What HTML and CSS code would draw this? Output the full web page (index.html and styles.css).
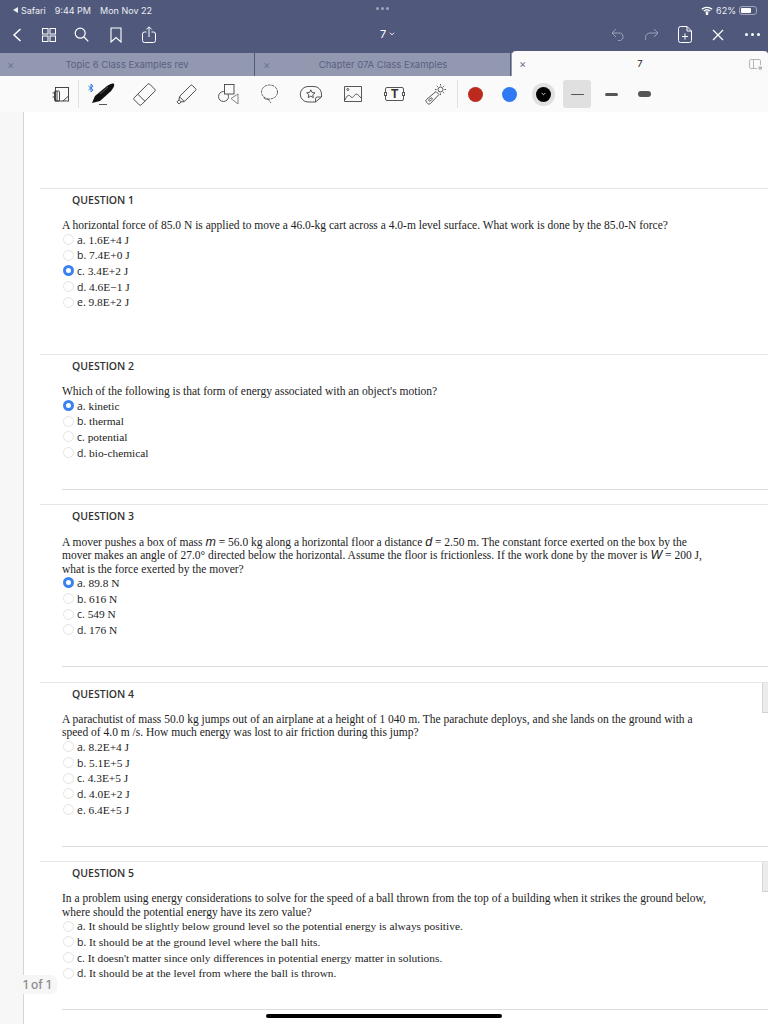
FILE: index.html
```html
<!DOCTYPE html>
<html lang="en">
<head>
  <meta charset="UTF-8">
  <title>Quiz notes</title>
  <link rel="stylesheet" href="styles.css">
</head>
<body>

  <!-- Status bar -->
  <div class="status">
    <div class="status-left">
      <span class="back-tri"></span><span>Safari</span><span class="st-time">9:44 PM</span><span class="st-date">Mon Nov 22</span>
    </div>
    <div class="status-dots"><i></i><i></i><i></i></div>
    <div class="status-right">
      <svg width="12" height="9" viewBox="0 0 14 10" fill="none" stroke="#fff" stroke-width="1.6"><path d="M1 3.6C4.4.6 9.6.6 13 3.6"/><path d="M3.2 5.6c2.2-1.8 5.4-1.8 7.6 0"/><path d="M5.3 7.4c1-.8 2.4-.8 3.4 0"/><circle cx="7" cy="9" r=".7" fill="#fff"/></svg>
      <span>62%</span>
      <span class="battery"><span class="battery-fill"></span></span>
    </div>
  </div>

  <!-- Navigation -->
  <div class="nav">
    <div class="nav-left">
      <svg class="ic-back" width="10" height="16" viewBox="0 0 10 16" fill="none" stroke="#fff" stroke-width="1.5"><path d="M8.5 2 2 8l6.500 6"/></svg>
      <svg class="ic-grid" width="14" height="14" viewBox="0 0 14 14" fill="none" stroke="#fff" stroke-width="1"><rect x=".5" y=".5" width="5.500" height="5.500"/><rect x="8" y=".5" width="5.500" height="5.500"/><rect x=".5" y="8" width="5.500" height="5.500"/><rect x="8" y="8" width="5.500" height="5.500"/></svg>
      <svg class="ic-search" width="15" height="15" viewBox="0 0 15 15" fill="none" stroke="#fff" stroke-width="1.2"><circle cx="6.200" cy="6.200" r="5"/><path d="m10 10 4.300 4.300"/></svg>
      <svg class="ic-mark" width="12" height="16" viewBox="0 0 12 16" fill="none" stroke="#fff" stroke-width="1.1"><path d="M1 1h10v14L6 10.500 1 15z"/></svg>
      <svg class="ic-share" width="14" height="17" viewBox="0 0 14 17" fill="none" stroke="#fff" stroke-width="1"><path d="M4.500 6H2.500A2 2 0 0 0 .5 8v6.500a2 2 0 0 0 2 2h9a2 2 0 0 0 2-2V8a2 2 0 0 0-2-2h-2"/><path d="M7 11V1M4.300 3.500 7 .8l2.700 2.700"/></svg>
    </div>
    <div class="nav-title">7 <svg width="6" height="4" viewBox="0 0 6 4" fill="none" stroke="#e6e8f0" stroke-width="1"><path d="m.8.8 2.200 2 2.200-2"/></svg></div>
    <div class="nav-right">
      <svg class="ic-undo" width="15" height="13" viewBox="0 0 15 13" fill="none" stroke="#9aa0b8" stroke-width="1"><path d="M5 1 1 5l4 4"/><path d="M1 5h8.500a4 4 0 0 1 0 7.500H7"/></svg>
      <svg class="ic-redo" width="15" height="13" viewBox="0 0 15 13" fill="none" stroke="#9aa0b8" stroke-width="1"><path d="m10 1 4 4-4 4"/><path d="M14 5H6a4.500 4.500 0 0 0-4.500 4.500V12"/></svg>
      <svg class="ic-new" width="14" height="17" viewBox="0 0 14 17" fill="none" stroke="#fff" stroke-width="1"><path d="M2.500.5H9L13.500 5v9.500a2 2 0 0 1-2 2h-9a2 2 0 0 1-2-2v-12a2 2 0 0 1 2-2zM9 .5V5h4.500"/><path d="M7 7.500v6M4 10.500h6"/></svg>
      <svg class="ic-close" width="12" height="12" viewBox="0 0 12 12" fill="none" stroke="#fff" stroke-width="1.200"><path d="m1 1 10 10M11 1 1 11"/></svg>
      <div class="more"><i></i><i></i><i></i></div>
    </div>
  </div>

  <!-- Tabs -->
  <div class="tabs">
    <div class="tab"><span class="tab-x">&times;</span><span class="tab-name">Topic 6 Class Examples rev</span></div>
    <div class="tab"><span class="tab-x">&times;</span><span class="tab-name">Chapter 07A Class Examples</span></div>
    <div class="tab tab-active">
      <span class="tab-x">&times;</span><span class="tab-name">7</span>
      <svg class="tab-split" width="13" height="11" viewBox="0 0 13 11" fill="none" stroke="#b5b5b5" stroke-width="1"><path d="M11.500 6V2a1.500 1.500 0 0 0-1.500-1.500H2A1.500 1.500 0 0 0 .5 2v6A1.500 1.500 0 0 0 2 9.500h6M4.500.5v9"/><rect x="9.500" y="7.500" width="3.500" height="3" fill="#b5b5b5" stroke="none"/></svg>
    </div>
  </div>

  <!-- Tool bar -->
  <div class="tools">
    <div class="tool-set">
      <div class="tool">
        <svg width="17" height="15" viewBox="0 0 17 15" fill="none" stroke="#333" stroke-width=".9"><rect x="3.500" y=".5" width="13" height="13.500"/><rect x="2.500" y="4" width="5" height="10" rx="1"/><path d="M.5 6h2M.5 10h2M5 4v10M11 14l5.500-5"/></svg>
      </div>
      <div class="tool-sep"></div>
      <div class="tool">
        <svg class="bt" width="6" height="10" viewBox="0 0 6 10" fill="none" stroke="#2f78ee" stroke-width="1"><path d="M.5 3 5 6.800 3 9V1l2 2.200L.5 7"/></svg>
        <svg width="23" height="23" viewBox="0 0 23 23"><path d="M0 20 3 13 15 3C18 1 21 0 22 1c1 2-2 6-4 8L8 18z" fill="#111"/><path d="M7 21.500h8" stroke="#444" stroke-width=".9"/><path d="M8 11 16 4" stroke="#888" stroke-width=".6"/></svg>
      </div>
      <div class="tool">
        <svg width="23" height="23" viewBox="0 0 23 23" fill="none" stroke="#444" stroke-width=".9"><g transform="rotate(-45 11.500 11.500)"><rect x=".5" y="6.500" width="22" height="10" rx="1.500"/><path d="M7 6.500v10"/></g></svg>
      </div>
      <div class="tool">
        <svg width="21" height="21" viewBox="0 0 21 21" fill="none" stroke="#444" stroke-width=".9"><g transform="rotate(-45 10.500 10.500)"><rect x="4" y="7" width="17" height="7" rx="1"/><path d="M4 7 1.500 9v3L4 14M1.500 9H-1.500v3h3"/></g></svg>
      </div>
      <div class="tool">
        <svg width="21" height="20" viewBox="0 0 21 20" fill="none" stroke="#444" stroke-width=".9"><circle cx="5.500" cy="12.500" r="5"/><path d="M20 10v10l-7-5.500z" stroke="#777"/><rect x="6.500" y=".5" width="9.500" height="9.500" fill="#fafafa"/></svg>
      </div>
      <div class="tool">
        <svg width="19" height="20" viewBox="0 0 19 20" fill="none" stroke="#555" stroke-width=".9" stroke-dasharray="3 .7"><ellipse cx="9.500" cy="8" rx="8" ry="7"/><path d="M4 13c0 2 2 3 4 2M8 15l3 4"/></svg>
      </div>
      <div class="tool">
        <svg width="22" height="17" viewBox="0 0 22 17" fill="none" stroke="#444" stroke-width=".9"><path d="M15.500 16H8a7.500 7.500 0 0 1 0-15.500h6A7.500 7.500 0 0 1 21.500 8v3z"/><path d="M21 11h-3.500a2 2 0 0 0-2 2v3"/><path d="m10.800 3.800 1.300 2.700 2.900.3-2.200 2 .6 2.900-2.600-1.500-2.600 1.500.6-2.900-2.200-2 2.900-.3z"/></svg>
      </div>
      <div class="tool">
        <svg width="18" height="16" viewBox="0 0 18 16" fill="none" stroke="#444" stroke-width=".9"><path d="M.5 15.500V.5h17v15z"/><circle cx="3.800" cy="3.500" r="1"/><path d="M1 14c2-5 4-6 6-3 2 2 3-2 5-3 2 0 4 3 5 4"/></svg>
      </div>
      <div class="tool">
        <div class="text-tool"><span>T</span></div>
      </div>
      <div class="tool">
        <svg width="22" height="21" viewBox="0 0 22 21" fill="none" stroke="#444" stroke-width=".9"><path d="M11 7.500 14 10.500 5.500 19.500a2 2 0 0 1-3-.2l-1-1a2 2 0 0 1 .2-3z"/><rect x="3.500" y="14.500" width="4" height="2" rx="1" transform="rotate(-45 5.500 15.500)"/><circle cx="15.500" cy="5.500" r="2.500"/><path d="M15.500 0v1.500M15.500 9.500V11M10 5.500h1.500M19.500 5.500H21M11.800 1.800l1 1M18.200 8.200l1 1M19.200 1.800l-1 1"/></svg>
      </div>
      <div class="tool-sep"></div>
    </div>
    <div class="color-set">
      <div class="swatch"><span class="dot dot-red"></span></div>
      <div class="swatch"><span class="dot dot-blue"></span></div>
      <div class="swatch"><span class="dot dot-black"><svg width="5" height="4" viewBox="0 0 5 4" fill="none" stroke="#fff" stroke-width=".8"><path d="m.7 1 1.800 1.800L4.300 1"/></svg></span></div>
      <div class="swatch swatch-on"><span class="stroke stroke-s"></span></div>
      <div class="swatch"><span class="stroke stroke-m"></span></div>
      <div class="swatch"><span class="stroke stroke-l"></span></div>
    </div>
  </div>

  <!-- Document -->
  <div class="doc">
    <div class="side"></div>
    <div class="page">

      <div class="q">
        <h3>QUESTION 1</h3>
        <p class="q-text">A horizontal force of 85.0 N is applied to move a 46.0-kg cart across a 4.0-m level surface. What work is done by the 85.0-N force?</p>
        <div class="opt"><span class="radio"></span><span class="l">a.</span> 1.6E+4 J</div>
        <div class="opt"><span class="radio"></span><span class="l">b.</span> 7.4E+0 J</div>
        <div class="opt"><span class="radio radio-on"></span><span class="l">c.</span> 3.4E+2 J</div>
        <div class="opt"><span class="radio"></span><span class="l">d.</span> 4.6E&minus;1 J</div>
        <div class="opt"><span class="radio"></span><span class="l">e.</span> 9.8E+2 J</div>
        <div class="q-end q-end-none"></div>
      </div>

      <div class="q">
        <h3>QUESTION 2</h3>
        <p class="q-text">Which of the following is that form of energy associated with an object's motion?</p>
        <div class="opt"><span class="radio radio-on"></span><span class="l">a.</span> kinetic</div>
        <div class="opt"><span class="radio"></span><span class="l">b.</span> thermal</div>
        <div class="opt"><span class="radio"></span><span class="l">c.</span> potential</div>
        <div class="opt"><span class="radio"></span><span class="l">d.</span> bio-chemical</div>
        <div class="q-end"></div>
      </div>

      <div class="q">
        <h3>QUESTION 3</h3>
        <p class="q-text">A mover pushes a box of mass <span class="var">m</span> = 56.0 kg along a horizontal floor a distance <span class="var">d</span> = 2.50 m. The constant force exerted on the box by the<br>mover makes an angle of 27.0&deg; directed below the horizontal. Assume the floor is frictionless. If the work done by the mover is <span class="var">W</span> = 200 J,<br>what is the force exerted by the mover?</p>
        <div class="opt"><span class="radio radio-on"></span><span class="l">a.</span> 89.8 N</div>
        <div class="opt"><span class="radio"></span><span class="l">b.</span> 616 N</div>
        <div class="opt"><span class="radio"></span><span class="l">c.</span> 549 N</div>
        <div class="opt"><span class="radio"></span><span class="l">d.</span> 176 N</div>
        <div class="q-end"></div>
      </div>

      <div class="q">
        <span class="handle"></span>
        <h3>QUESTION 4</h3>
        <p class="q-text">A parachutist of mass 50.0 kg jumps out of an airplane at a height of 1 040 m. The parachute deploys, and she lands on the ground with a<br>speed of 4.0 m /s. How much energy was lost to air friction during this jump?</p>
        <div class="opt"><span class="radio"></span><span class="l">a.</span> 8.2E+4 J</div>
        <div class="opt"><span class="radio"></span><span class="l">b.</span> 5.1E+5 J</div>
        <div class="opt"><span class="radio"></span><span class="l">c.</span> 4.3E+5 J</div>
        <div class="opt"><span class="radio"></span><span class="l">d.</span> 4.0E+2 J</div>
        <div class="opt"><span class="radio"></span><span class="l">e.</span> 6.4E+5 J</div>
        <div class="q-end"></div>
      </div>

      <div class="q">
        <span class="handle"></span>
        <h3>QUESTION 5</h3>
        <p class="q-text">In a problem using energy considerations to solve for the speed of a ball thrown from the top of a building when it strikes the ground below,<br>where should the potential energy have its zero value?</p>
        <div class="opt"><span class="radio"></span><span class="l">a.</span> It should be slightly below ground level so the potential energy is always positive.</div>
        <div class="opt"><span class="radio"></span><span class="l">b.</span> It should be at the ground level where the ball hits.</div>
        <div class="opt"><span class="radio"></span><span class="l">c.</span> It doesn't matter since only differences in potential energy matter in solutions.</div>
        <div class="opt"><span class="radio"></span><span class="l">d.</span> It should be at the level from where the ball is thrown.</div>
        <div class="q-end"></div>
      </div>

    </div>
  </div>

  <div class="page-count">1 of 1</div>
  <div class="home-bar"></div>

</body>
</html>
```

FILE: styles.css
```css
/* Page */
html, body {
  margin: 0;
  height: 1024px;
  overflow: hidden;
  background: #fff;
}

body {
  position: relative;
  font-family: "Liberation Serif", serif;
}

/* Status bar */
.status {
  height: 20px;
  background: #50597b;
  color: #eceef4;
  font-family: Inter, sans-serif;
  font-size: 9px;
  display: flex;
  align-items: center;
  justify-content: space-between;
  padding: 0 11px 0 13px;
  box-sizing: border-box;
  position: relative;
}

.status-left {
  display: flex;
  align-items: center;
}

.back-tri {
  width: 0;
  height: 0;
  border-top: 3px solid transparent;
  border-bottom: 3px solid transparent;
  border-right: 5px solid #eceef4;
  margin-right: 3px;
}

.st-time { margin-left: 9px; }
.st-date { margin-left: 9px; }

.status-dots {
  position: absolute;
  left: 376px;
  top: 7px;
  display: flex;
  gap: 2px;
}

.status-dots i {
  width: 3px;
  height: 3px;
  border-radius: 50%;
  background: #a0a5bb;
}

.status-right {
  display: flex;
  align-items: center;
  gap: 3px;
}

.battery {
  width: 18px;
  height: 9px;
  border: 1px solid #a0a5bb;
  border-radius: 3px;
  padding: 1px;
  box-sizing: border-box;
  display: flex;
}

.battery-fill {
  width: 10px;
  background: #fff;
  border-radius: 1px;
}

/* Navigation */
.nav {
  height: 33px;
  background: #50597b;
  position: relative;
  display: flex;
  align-items: center;
  justify-content: space-between;
  padding: 0 8px 4px 12px;
  box-sizing: border-box;
}

.nav svg { display: block; }

.nav-left, .nav-right {
  display: flex;
  align-items: center;
}

.ic-grid { margin-left: 20px; }
.ic-search { margin-left: 18px; }
.ic-mark { margin-left: 21px; }
.ic-share { margin-left: 20px; }

.nav-title {
  position: absolute;
  left: 380px;
  top: 7px;
  color: #fff;
  font-family: Inter, sans-serif;
  font-size: 11px;
  display: flex;
  align-items: center;
  gap: 3px;
}

.ic-redo { margin-left: 18px; }
.ic-new { margin-left: 19px; }
.ic-close { margin-left: 20px; }

.more {
  display: flex;
  gap: 3px;
  margin-left: 21px;
}

.more i {
  width: 3px;
  height: 3px;
  border-radius: 50%;
  background: #fff;
}

/* Tabs */
.tabs {
  height: 23px;
  background: #9298b0;
  display: flex;
  font-family: Inter, sans-serif;
  font-size: 9.5px;
  color: #5a6180;
}

.tab {
  width: 255px;
  margin-right: 1px;
  box-sizing: border-box;
  border-right: 1px solid #50597b;
  position: relative;
  display: flex;
  align-items: center;
  justify-content: center;
}

.tab-x {
  position: absolute;
  left: 7px;
  top: 50%;
  transform: translateY(-50%);
  font-size: 11px;
  color: #6d738f;
}

.tab-active {
  flex: 1;
  margin: -2px 0 0 0;
  background: #fafafa;
  border: 0;
  border-radius: 4px 4px 0 0;
  color: #222;
  font-size: 9.5px;
}

.tab-split {
  position: absolute;
  right: 6px;
  top: 8px;
}

/* Tool bar */
.tools {
  height: 36px;
  background: #fafafa;
  display: flex;
  padding-left: 40px;
  box-sizing: border-box;
}

.tool-set {
  display: flex;
  align-items: center;
}

.tool {
  width: 41.6px;
  flex: none;
  display: flex;
  align-items: center;
  justify-content: center;
  position: relative;
}

.tool svg { display: block; overflow: visible; }

.tool-sep {
  width: 1px;
  height: 28px;
  background: #e2e2e2;
  flex: none;
}

.tool .bt {
  position: absolute;
  left: 5px;
  top: 0;
}

.tool-set .tool:first-child { margin-right: -4px; }
.tool-set .tool-sep + .tool { margin-left: 4px; }

.text-tool {
  position: relative;
  width: 19px;
  height: 14px;
  border: 1px solid #555;
  border-radius: 2px;
  box-sizing: border-box;
  display: flex;
  align-items: center;
  justify-content: center;
  font: bold 12px "Liberation Sans", sans-serif;
  color: #333;
}

.text-tool::before, .text-tool::after {
  content: "";
  position: absolute;
  top: 4px;
  width: 1px;
  height: 2px;
  border: 1px solid #555;
  background: #fafafa;
}

.text-tool::before { left: -2px; }
.text-tool::after { right: -2px; }

.color-set {
  display: flex;
  align-items: center;
  margin-left: 4px;
}

.swatch {
  width: 28px;
  height: 28px;
  margin-right: 5.8px;
  display: flex;
  align-items: center;
  justify-content: center;
  border-radius: 3px;
  flex: none;
}

.swatch-on { background: #e0e0e0; }

.dot {
  display: flex;
  align-items: center;
  justify-content: center;
  width: 15px;
  height: 15px;
  border-radius: 50%;
}

.dot-red { background: #bc2a1d; }
.dot-blue { background: #3079f5; }

.dot-black {
  background: #000;
  box-shadow: 0 0 0 4px #e0e0e0;
}

.stroke {
  width: 13px;
  background: #555;
  border-radius: 3px;
}

.stroke-s { height: 1px; }
.stroke-m { height: 3px; }
.stroke-l { height: 6px; }

/* Document */
.doc {
  display: flex;
}

.side {
  width: 23px;
  flex: none;
  height: 912px;
  background: #f7f7f7;
  border-right: 1px solid #d6d6d6;
}

.page {
  flex: 1;
  padding-top: 76px;
}

/* Question */
.q {
  position: relative;
  margin-left: 16px;
  border-top: 1px solid #e6e6e6;
}

.q h3 {
  margin: 0 0 8.2px 32px;
  font: 600 10.5px/22px "Open Sans", sans-serif;
  color: #333;
}

.q-text {
  margin: 0 0 0 22px;
  font-size: 11.5px;
  line-height: 13.5px;
  color: #222;
}

.var {
  font: italic 12.5px/1 "Liberation Sans", sans-serif;
}

.opt {
  height: 15.7px;
  line-height: 15.7px;
  font-size: 11.4px;
  color: #222;
  display: flex;
  align-items: center;
  margin-left: 23px;
  white-space: pre;
}

.l {
  font-family: "Open Sans", sans-serif;
  font-size: 10.5px;
}

.radio {
  width: 11px;
  height: 11px;
  box-sizing: border-box;
  border: 1px solid #e4e4e4;
  border-radius: 50%;
  background: #fff;
  margin: -2px 3px 0 0;
  flex: none;
}

.radio-on {
  border: 3px solid #3a82f0;
}

.q-end {
  margin: 27.3px 0 14.6px 22px;
  border-top: 1px solid #dcdcdc;
}

.q-end-none { border-top-color: transparent; }

.handle {
  position: absolute;
  right: 0;
  top: 0;
  width: 6px;
  height: 30px;
  background: #ececec;
  border-left: 1px solid #d8d8d8;
  border-bottom: 1px solid #d0d0d0;
  box-sizing: border-box;
}

/* Overlays */
.page-count {
  position: absolute;
  left: 17px;
  top: 975px;
  width: 40px;
  height: 19px;
  text-align: center;
  font: 500 12px/19px Inter, sans-serif;
  color: #8b8b8b;
  background: #f6f6f6;
  border-radius: 6px;
}

.home-bar {
  position: absolute;
  left: 266px;
  top: 1014px;
  width: 236px;
  height: 4px;
  border-radius: 2px;
  background: #000;
}
```
